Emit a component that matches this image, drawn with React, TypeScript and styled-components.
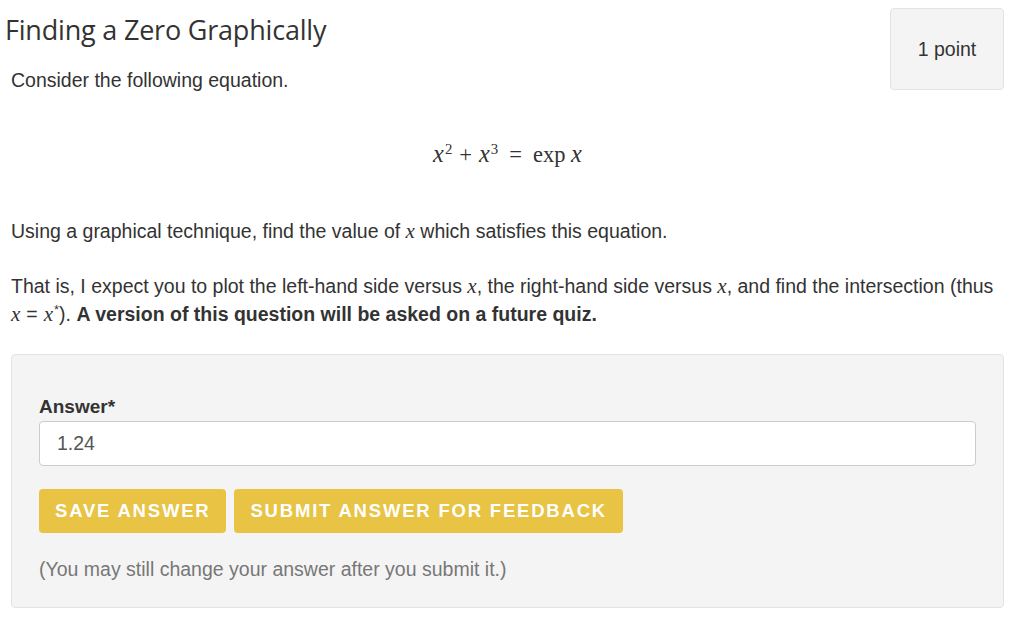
import React, { useState } from 'react'
import styled, { createGlobalStyle } from 'styled-components'

const GlobalStyle = createGlobalStyle`
  html, body {
    margin: 0;
    padding: 0;
    background: #fff;
  }
  body {
    font-family: "Liberation Sans", Arial, sans-serif;
    color: #333;
  }
`

const Page = styled.div`
  padding: 8px 20px 0 11px;
`

const HeaderRow = styled.div`
  display: flex;
  justify-content: space-between;
  align-items: flex-start;
`

const Title = styled.h1`
  margin: 3px 0 0 -6px;
  font-family: "Open Sans", sans-serif;
  font-weight: 400;
  font-size: 27px;
  letter-spacing: -0.2px;
  color: #333;
`

const Points = styled.div`
  width: 114px;
  height: 82px;
  box-sizing: border-box;
  display: flex;
  align-items: center;
  justify-content: center;
  background: #f4f4f4;
  border: 1px solid #e3e3e3;
  border-radius: 4px;
  font-size: 19.5px;
  color: #333;
`

const Text = styled.p<{ $top?: number }>`
  margin: ${(p) => p.$top ?? 0}px 0 0;
  font-size: 19.5px;
  line-height: 28px;
  color: #333;
`

const Intro = styled(Text)`
  margin-top: -24px;
`

const Equation = styled.div`
  margin: 46px 0 0;
  text-align: center;
  font-family: "Liberation Serif", "Times New Roman", serif;
  font-size: 22.5px;
  line-height: 28px;
  color: #333;
`

const MathVar = styled.i`
  font-family: "Liberation Serif", "Times New Roman", serif;
  font-size: 1.08em;
`

const Sup = styled.sup`
  font-size: 0.66em;
  font-style: normal;
  vertical-align: 0.55em;
  line-height: 0;
  margin-left: 1px;
`

const Op = styled.span<{ $gap?: number }>`
  margin: 0 ${(p) => p.$gap ?? 5}px;
`

const Panel = styled.div`
  margin-top: 26px;
  background: #f4f4f4;
  border: 1px solid #e3e3e3;
  border-radius: 4px;
  padding: 41px 27px 25px 27px;
`

const Label = styled.label`
  display: block;
  font-weight: 700;
  font-size: 19px;
  color: #333;
  margin-bottom: 3px;
`

const Input = styled.input`
  display: block;
  width: 100%;
  height: 45px;
  box-sizing: border-box;
  border: 1px solid #ccc;
  border-radius: 4px;
  background: #fff;
  padding: 0 17px;
  font-family: "Liberation Sans", Arial, sans-serif;
  font-size: 19.5px;
  color: #555;
  outline: none;
`

const Buttons = styled.div`
  display: flex;
  gap: 8px;
  margin-top: 23px;
`

const Button = styled.button`
  height: 44px;
  padding: 0 16px;
  border: none;
  border-radius: 4px;
  background: #e8c344;
  color: #fff;
  font-family: "Liberation Sans", Arial, sans-serif;
  font-weight: 700;
  font-size: 18.5px;
  letter-spacing: 1.8px;
  text-transform: uppercase;
  cursor: pointer;
`

const Note = styled.p`
  margin: 23px 0 0;
  font-size: 19.5px;
  line-height: 26px;
  color: #777;
`

const X = () => <MathVar>x</MathVar>

export default function App() {
  const [answer, setAnswer] = useState('1.24')

  return (
    <>
      <GlobalStyle />
      <Page>
        <HeaderRow>
          <Title>Finding a Zero Graphically</Title>
          <Points>1 point</Points>
        </HeaderRow>
        <Intro>Consider the following equation.</Intro>
        <Equation>
          <X />
          <Sup>2</Sup>
          <Op $gap={7}>+</Op>
          <X />
          <Sup>3</Sup>
          <Op $gap={11}>=</Op>
          exp <X />
        </Equation>
        <Text $top={48}>
          Using a graphical technique, find the value of <X /> which satisfies this equation.
        </Text>
        <Text $top={27}>
          That is, I expect you to plot the left-hand side versus <X />, the right-hand side versus <X />,
          and find the intersection (thus <X />
          <Op $gap={6}>=</Op>
          <X />
          <Sup>*</Sup>). <b>A version of this question will be asked on a future quiz.</b>
        </Text>
        <Panel>
          <Label htmlFor="answer">Answer*</Label>
          <Input id="answer" value={answer} onChange={(e) => setAnswer(e.target.value)} />
          <Buttons>
            <Button>Save Answer</Button>
            <Button>Submit Answer for Feedback</Button>
          </Buttons>
          <Note>(You may still change your answer after you submit it.)</Note>
        </Panel>
      </Page>
    </>
  )
}
